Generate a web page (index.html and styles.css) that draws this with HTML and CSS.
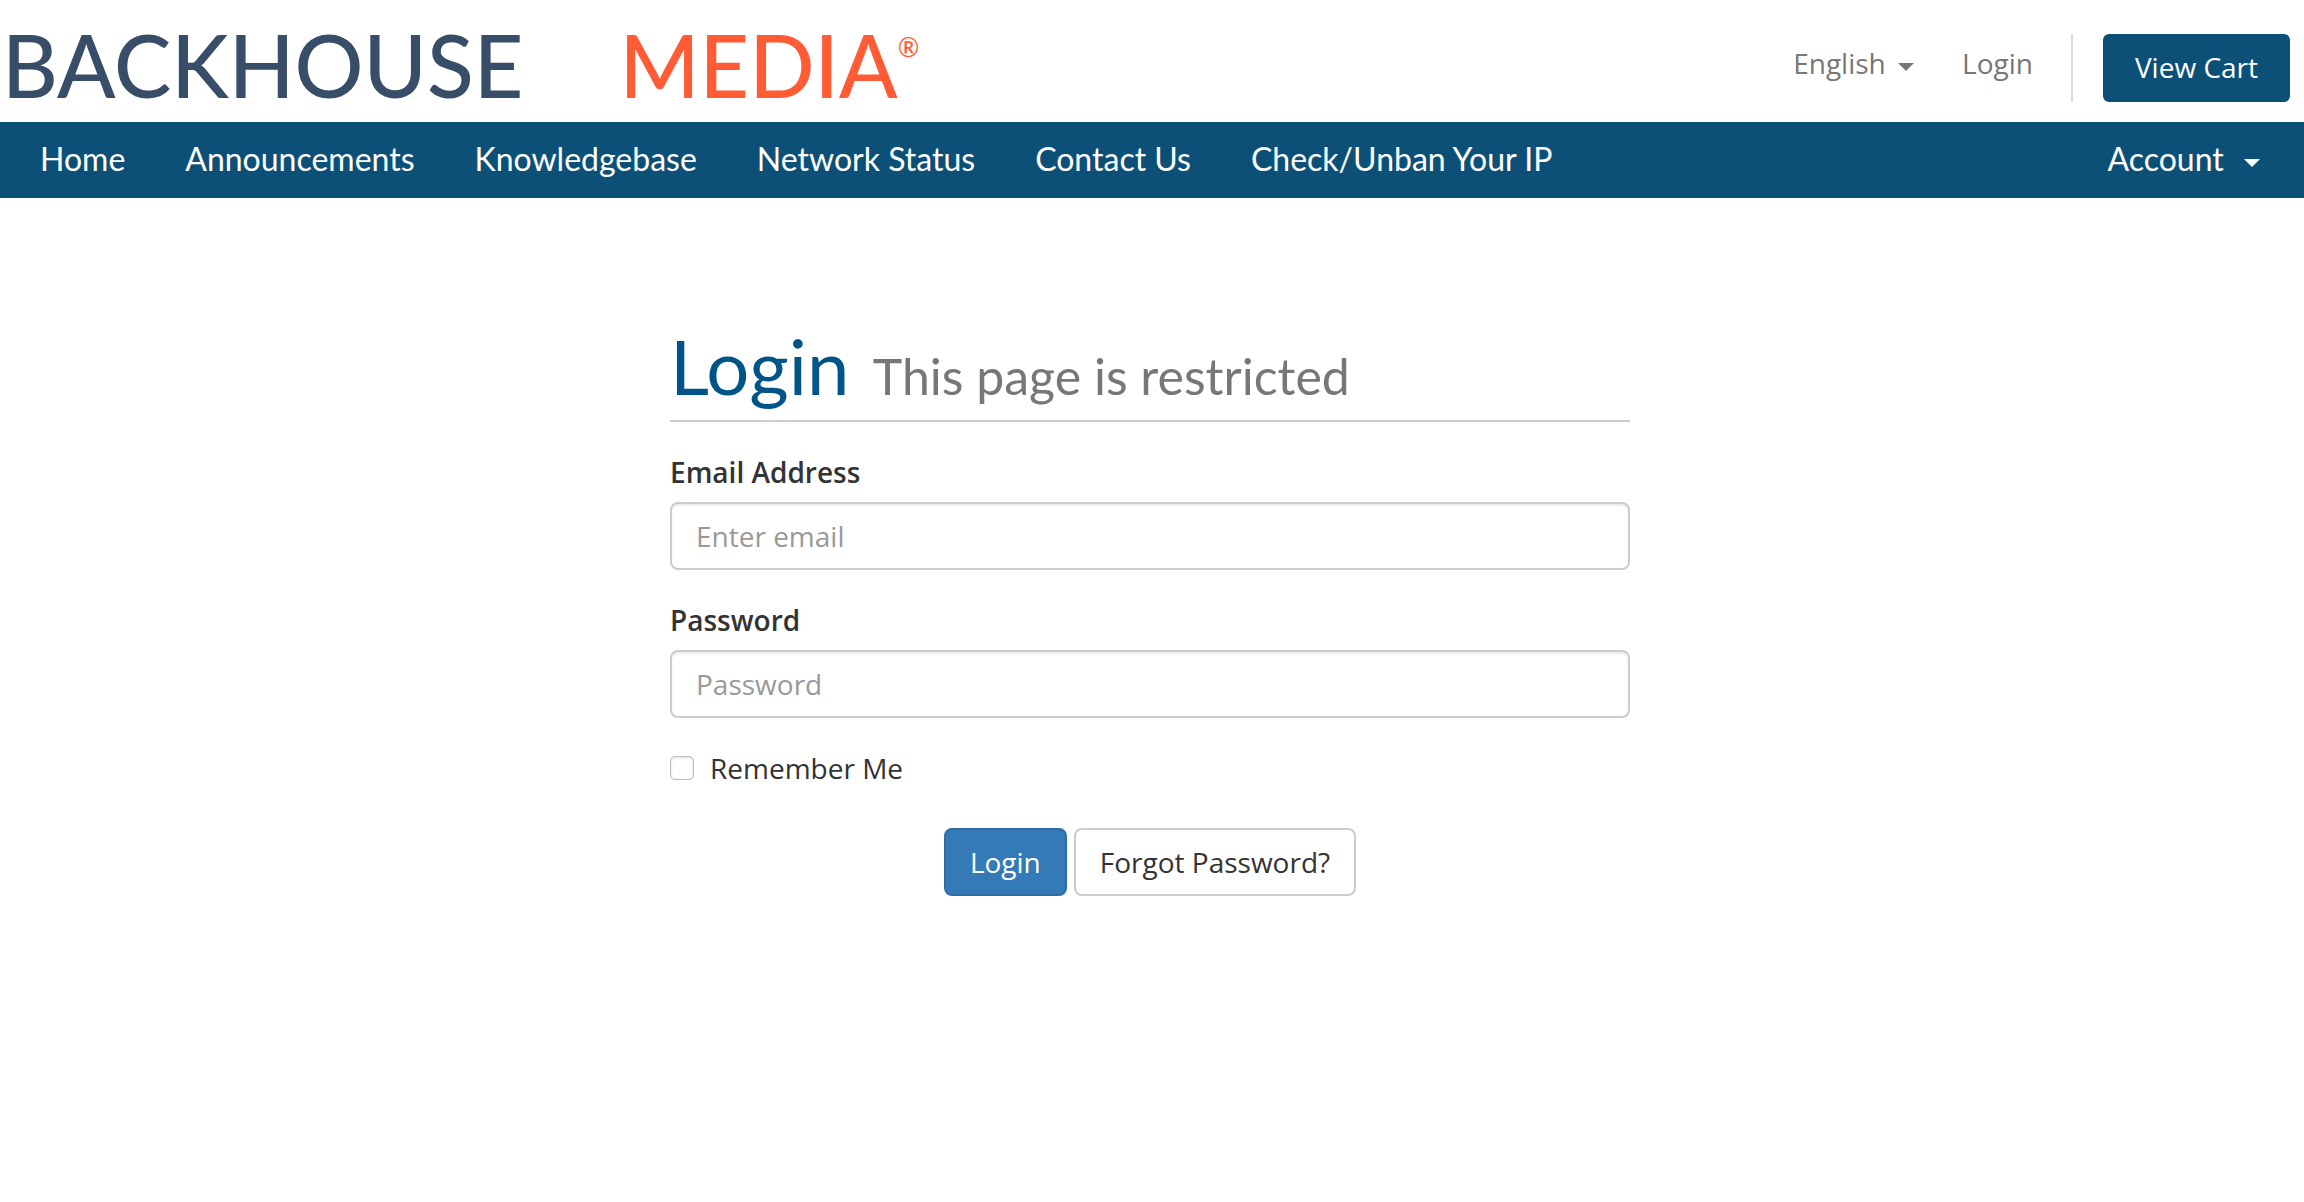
FILE: index.html
```html
<!DOCTYPE html>
<html lang="en">
<head>
    <meta charset="UTF-8">
    <meta name="viewport" content="width=device-width, initial-scale=1.0">
    <title>Login - Backhouse Media</title>
    <link rel="stylesheet" href="styles.css">
</head>
<body>
    <header class="header">
        <a class="logo" href="#">
            <span>BACKHOUSE</span>
            <span class="logo-accent">MEDIA<sup class="logo-mark">&reg;</sup></span>
        </a>
        <div class="top-nav">
            <button type="button" class="top-link">English <span class="caret"></span></button>
            <a class="top-link" href="#">Login</a>
            <div class="cart-wrap">
                <a class="btn-cart" href="#">View Cart</a>
            </div>
        </div>
    </header>

    <nav class="main-menu">
        <ul class="menu-list">
            <li><a href="#">Home</a></li>
            <li><a href="#">Announcements</a></li>
            <li><a href="#">Knowledgebase</a></li>
            <li><a href="#">Network Status</a></li>
            <li><a href="#">Contact Us</a></li>
            <li><a href="#">Check/Unban Your IP</a></li>
        </ul>
        <button type="button" class="menu-account">Account <span class="caret"></span></button>
    </nav>

    <main class="content">
        <div class="login-box">
            <h1 class="page-title">Login <small>This page is restricted</small></h1>
            <form>
                <div class="form-group">
                    <label for="email">Email Address</label>
                    <input type="email" id="email" class="form-control" placeholder="Enter email">
                </div>
                <div class="form-group">
                    <label for="password">Password</label>
                    <input type="password" id="password" class="form-control" placeholder="Password">
                </div>
                <label class="checkbox">
                    <input type="checkbox"> Remember Me
                </label>
                <div class="actions">
                    <button type="submit" class="btn btn-primary">Login</button>
                    <a class="btn" href="#">Forgot Password?</a>
                </div>
            </form>
        </div>
    </main>
</body>
</html>
```
FILE: styles.css
```css
* {
    box-sizing: border-box;
}

body {
    margin: 0;
    background: #fff;
    color: #333;
    font-family: "Open Sans", "Noto Sans", sans-serif;
    font-size: 28px;
    line-height: 40px;
}

a {
    color: inherit;
    text-decoration: none;
}

button {
    font: inherit;
    cursor: pointer;
}

.caret {
    display: inline-block;
    border-top: 8px solid;
    border-left: 8px solid transparent;
    border-right: 8px solid transparent;
    vertical-align: middle;
}

/* Header */
.header {
    display: flex;
    justify-content: space-between;
    align-items: flex-start;
    height: 122px;
    padding: 0 14px 0 2px;
}

.logo {
    display: flex;
    gap: 96px;
    padding-top: 13px;
    color: #384d67;
    font-family: Lato, sans-serif;
    font-size: 86px;
    font-weight: 500;
    line-height: 104px;
}

.logo-accent {
    display: flex;
    align-items: flex-start;
    color: #ff5c35;
}

.logo-mark {
    font-size: 26px;
    line-height: 68px;
}

.top-nav {
    display: flex;
    align-items: flex-start;
    padding-top: 34px;
    color: #777;
}

.top-link {
    margin-right: 48px;
    padding: 9px 0;
    border: 0;
    background: none;
    color: inherit;
    line-height: 40px;
}

.top-link .caret {
    margin-left: 5px;
}

.cart-wrap {
    margin-left: -10px;
    padding-left: 30px;
    border-left: 2px solid #ddd;
}

.btn-cart {
    display: block;
    padding: 13px 32px 15px;
    border-radius: 6px;
    background: #0d5077;
    color: #fff;
}

/* Main menu */
.main-menu {
    display: flex;
    justify-content: space-between;
    padding: 0 44px 0 10px;
    background: #0d5077;
    color: #fff;
    font-family: Lato, sans-serif;
    font-size: 32px;
}

.menu-list {
    display: flex;
    margin: 0;
    padding: 0;
    list-style: none;
}

.menu-list a {
    display: block;
    padding: 17px 30px 19px;
}

.menu-account {
    padding: 0 0 2px;
    border: 0;
    background: none;
    color: inherit;
}

.menu-account .caret {
    margin-left: 12px;
}

/* Login form */
.content {
    padding: 128px 4px 0 0;
}

.login-box {
    width: 100%;
    max-width: 960px;
    margin: 0 auto;
}

.page-title {
    margin: 0 0 30px;
    padding-bottom: 14px;
    border-bottom: 2px solid #ccc;
    color: #058;
    font-family: Lato, sans-serif;
    font-size: 76px;
    font-weight: 400;
    line-height: 80px;
}

.page-title small {
    margin-left: 4px;
    color: #777;
    font-size: 50px;
    line-height: 50px;
}

.form-group {
    margin-bottom: 30px;
}

.form-group label {
    display: block;
    margin-bottom: 10px;
    font-weight: 600;
}

.form-control {
    display: block;
    width: 100%;
    height: 68px;
    padding: 12px 24px;
    border: 2px solid #ccc;
    border-radius: 8px;
    background: #fff;
    box-shadow: inset 0 2px 2px rgba(0, 0, 0, 0.08);
    font: inherit;
}

.form-control::placeholder {
    color: #999;
}

.checkbox {
    display: flex;
    align-items: center;
    gap: 16px;
}

.checkbox input {
    appearance: none;
    width: 24px;
    height: 24px;
    margin: 0;
    border: 1px solid #bbb;
    border-radius: 5px;
    background: #fff;
    box-shadow: inset 0 1px 3px rgba(0, 0, 0, 0.12);
}

.actions {
    display: flex;
    justify-content: center;
    gap: 7px;
    margin-top: 40px;
}

.btn {
    padding: 12px 24px;
    border: 2px solid #ccc;
    border-radius: 8px;
    background: #fff;
    color: #333;
}

.btn-primary {
    border-color: #2e6da4;
    background: #337ab7;
    color: #fff;
}
```
